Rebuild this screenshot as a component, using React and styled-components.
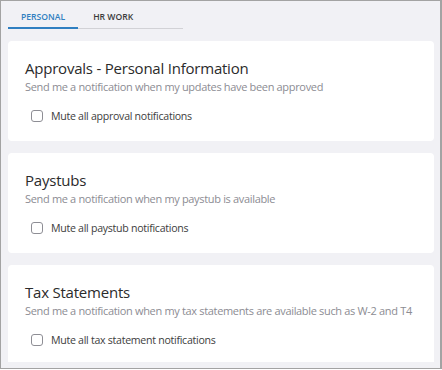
import React from 'react';
import styled, { createGlobalStyle } from 'styled-components';

const GlobalStyle = createGlobalStyle`
  html, body {
    margin: 0;
    padding: 0;
    background: #ffffff;
  }
  body {
    font-family: "Open Sans", "Liberation Sans", sans-serif;
  }
`;

const Frame = styled.div`
  width: 442px;
  height: 369px;
  box-sizing: border-box;
  border: 1px solid #a3a3a3;
  border-right-width: 2px;
  background: #f1f1f5;
  overflow: hidden;
`;

const ScrollArea = styled.div`
  height: 361px;
  overflow: hidden;
  padding: 0 6px 0 7px;
`;

const TabList = styled.div`
  display: flex;
  width: 175px;
  height: 27px;
  border-bottom: 1px solid #d2d2d6;
  margin-bottom: 12px;
`;

const Tab = styled.div`
  display: flex;
  align-items: center;
  justify-content: center;
  padding: 0 ${(p) => (p.$active ? '13px' : '15px')};
  font-size: 8.6px;
  font-weight: 600;
  color: ${(p) => (p.$active ? '#2f7fc1' : '#3a3a3a')};
  border-bottom: 2px solid ${(p) => (p.$active ? '#2f7fc1' : 'transparent')};
  margin-bottom: -1px;
  padding-top: 5px;
`;

const CardList = styled.div`
  display: flex;
  flex-direction: column;
  gap: 12px;
`;

const Card = styled.section`
  background: #ffffff;
  border-radius: 4px;
  padding: 17px 17px 17px;
`;

const Title = styled.h2`
  margin: 0;
  font-size: 15px;
  line-height: 20px;
  font-weight: 400;
  letter-spacing: -0.22px;
  color: #2b2b2b;
`;

const Subtitle = styled.p`
  margin: 1px 0 0;
  font-size: 11px;
  line-height: 16px;
  letter-spacing: -0.33px;
  color: #8c8c93;
  white-space: nowrap;
`;

const CheckRow = styled.label`
  display: flex;
  align-items: center;
  gap: 8px;
  margin: 13px 0 0 6px;
  font-size: 10.6px;
  line-height: 16px;
  letter-spacing: -0.28px;
  color: #3d3d3d;
`;

const Box = styled.span`
  width: 10px;
  height: 10px;
  border: 1px solid #8e8e95;
  border-radius: 3px;
  background: #fff;
`;

const sections = [
  {
    title: 'Approvals - Personal Information',
    text: 'Send me a notification when my updates have been approved',
    mute: 'Mute all approval notifications',
  },
  {
    title: 'Paystubs',
    text: 'Send me a notification when my paystub is available',
    mute: 'Mute all paystub notifications',
  },
  {
    title: 'Tax Statements',
    text: 'Send me a notification when my tax statements are available such as W-2 and T4',
    mute: 'Mute all tax statement notifications',
  },
];

export default function App() {
  return (
    <>
      <GlobalStyle />
      <Frame>
        <ScrollArea>
          <TabList>
            <Tab $active>PERSONAL</Tab>
            <Tab>HR WORK</Tab>
          </TabList>
          <CardList>
            {sections.map((s) => (
              <Card key={s.title}>
                <Title>{s.title}</Title>
                <Subtitle>{s.text}</Subtitle>
                <CheckRow>
                  <Box />
                  {s.mute}
                </CheckRow>
              </Card>
            ))}
          </CardList>
        </ScrollArea>
      </Frame>
    </>
  );
}
